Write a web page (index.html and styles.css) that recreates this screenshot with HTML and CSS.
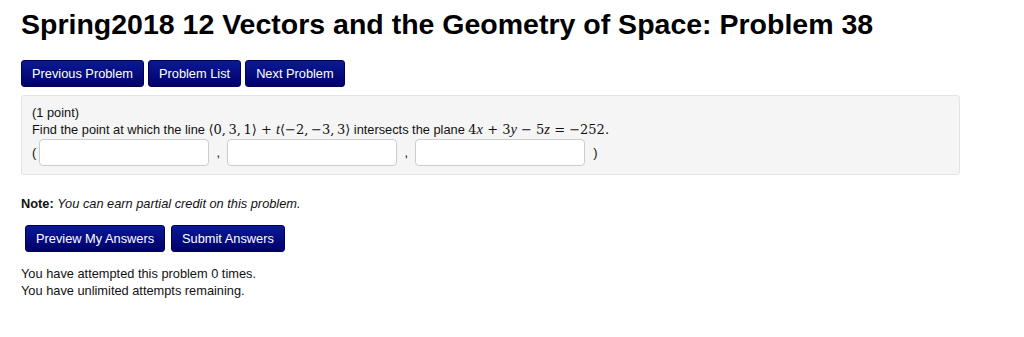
FILE: index.html
```html
<!doctype html>
<html lang="en">
<head>
<meta charset="utf-8" />
<title>Spring2018 12 Vectors and the Geometry of Space: Problem 38</title>
<link rel="stylesheet" href="styles.css">
</head>
<body>
 <div class="page">
   <h1 class="title">Spring2018 12 Vectors and the Geometry of Space: Problem 38</h1>

   <div class="nav">
     <button class="btn">Previous Problem</button>
     <button class="btn">Problem List</button>
     <button class="btn">Next Problem</button>
   </div>

   <!-- Problem body -->
   <div class="problem">
     <div class="line">(1 point)</div>
     <div class="line">Find the point at which the line
       <span class="math">⟨0,&#8201;3,&#8201;1⟩ + <i>t</i>⟨−2,&#8201;−3,&#8201;3⟩</span>
       intersects the plane
       <span class="math">4<i>x</i> + 3<i>y</i> − 5<i>z</i> = −252.</span>
     </div>
     <div class="answers">
       <span class="paren">(</span>
       <input class="answer" type="text">
       <span class="comma">,</span>
       <input class="answer" type="text">
       <span class="comma">,</span>
       <input class="answer" type="text">
       <span class="paren close">)</span>
     </div>
   </div>

   <p class="note"><b>Note:</b> <i>You can earn partial credit on this problem.</i></p>

   <div class="submit">
     <button class="btn">Preview My Answers</button>
     <button class="btn">Submit Answers</button>
   </div>

   <div class="attempts">
     <div>You have attempted this problem 0 times.</div>
     <div>You have unlimited attempts remaining.</div>
   </div>
 </div>
</body>
</html>
```

FILE: styles.css
```css
:root{
 --text:#111;
 --btn-top:#0a1a94;--btn-bot:#00006a;--btn-border:#00005a;
 --well:#f5f5f5;--well-border:#e3e3e3;
 --input-border:#cccccc;
}
*{box-sizing:border-box;margin:0;padding:0}
body{
  font-family:"Liberation Sans",Arial,sans-serif;font-size:12.8px;line-height:17px;
  color:var(--text);background:#fff;
}
.page{width:939px;margin-left:21px;padding-top:8px}
.title{font-size:28.5px;line-height:33px;font-weight:700;color:#000}
.nav{display:flex;gap:4px;margin-top:19px}
.btn{
  font-family:"Liberation Sans",Arial,sans-serif;font-size:12.8px;line-height:15px;
  color:#fff;height:27px;padding:0 10px;
  background:linear-gradient(to bottom,var(--btn-top),var(--btn-bot));
  border:1px solid var(--btn-border);border-radius:3px;cursor:pointer;
}
.problem{
  margin-top:8px;background:var(--well);border:1px solid var(--well-border);
  border-radius:3px;padding:8px 10px 8px;
}
.math{font-family:"DejaVu Serif","Liberation Serif",serif;font-size:13px}
.math i{font-family:"Liberation Serif",serif;font-size:14.5px}
.answers{display:flex;align-items:center;margin-top:1px}
.paren{margin-right:3px}
.answer{
  width:170px;height:27px;border:1px solid var(--input-border);border-radius:4px;
  background:#fff;
}
.comma{width:18px;text-align:center}
.paren.close{margin:0 0 0 8px}
.note{margin-top:20px;line-height:17px}
.submit{display:flex;gap:6px;margin:13px 0 0 4px}
.attempts{margin-top:13px;line-height:17px}
```
